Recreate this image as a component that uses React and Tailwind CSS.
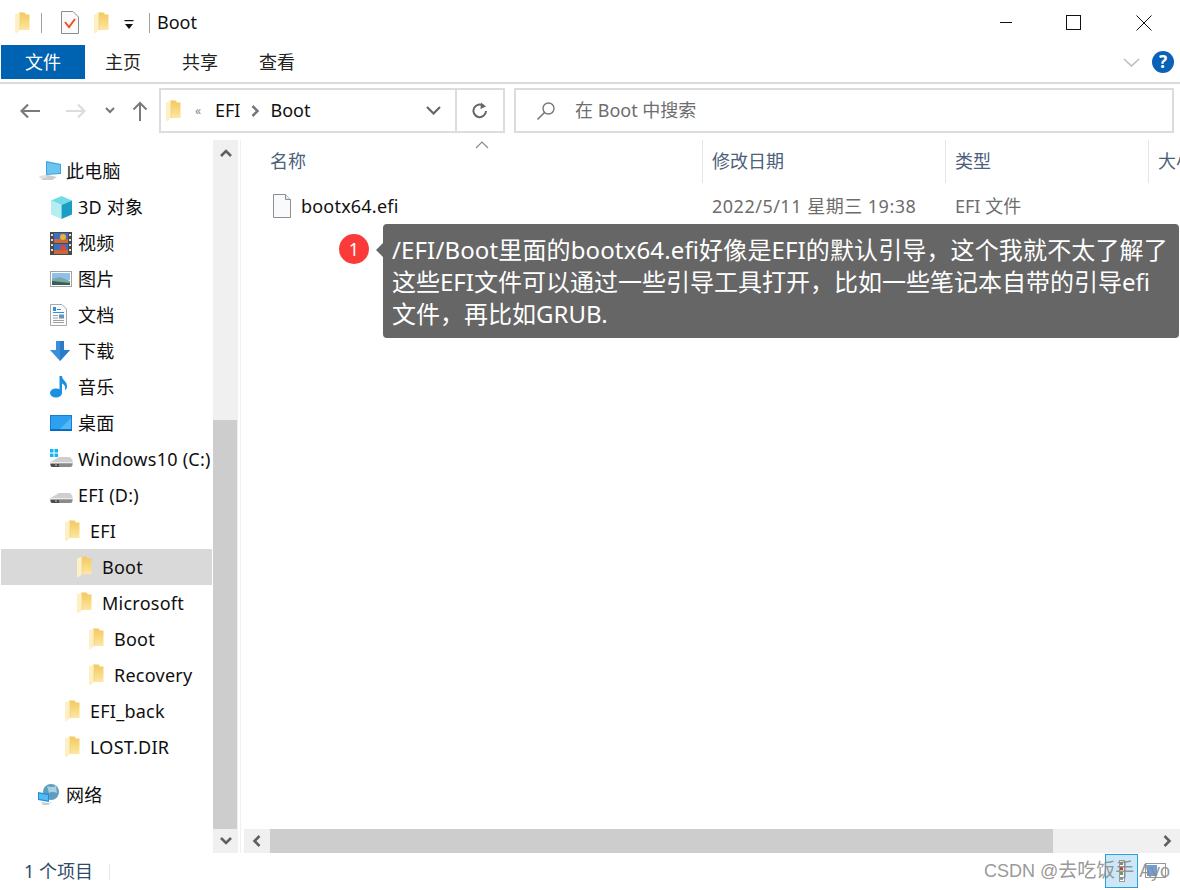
import React from 'react';

const FONT = '"Noto Sans", "Noto Sans CJK SC", sans-serif';

// small yellow explorer folder
const Folder = ({ className = '' }) => (
  <svg width="15" height="22" viewBox="0 0 15 22" className={className}>
    <defs>
      <linearGradient id="folderBody" x1="0" y1="0" x2="0" y2="1">
        <stop offset="0" stopColor="#f3c85f" />
        <stop offset="0.55" stopColor="#f9d981" />
        <stop offset="1" stopColor="#fde7a3" />
      </linearGradient>
    </defs>
    <path d="M4 0.5 H9.5 L11 2.5 H14.5 V18 H4 Z" fill="url(#folderBody)" />
    <path d="M0 2.5 L5 0.5 V18 L1.2 21.5 L0 20.5 Z" fill="#fdf0c4" />
    <path d="M5 0.5 V18" stroke="#f0cf7e" strokeWidth="0.6" />
  </svg>
);

const Drive = ({ win }) => (
  <svg width="23" height="20" viewBox="0 0 23 20">
    {win && (
      <g fill="#12b5f0">
        <rect x="0" y="0" width="3.5" height="3.5" />
        <rect x="4.5" y="0" width="3.5" height="3.5" />
        <rect x="0" y="4.5" width="3.5" height="3.5" />
        <rect x="4.5" y="4.5" width="3.5" height="3.5" />
      </g>
    )}
    <path d="M0.5 13 L9 8 H20 L22.5 11 V14 H0.5 Z" fill="#cfcfcf" />
    <path d="M0.5 13.5 H22.5 V15.5 Q22.5 18 20 18 H2.5 Q0.5 18 0.5 15.5 Z" fill="#8a8a8a" />
    <path d="M0.5 15 H9 V18 H2.5 Q0.5 18 0.5 15.5 Z" fill="#4c4c4c" />
    <rect x="5" y="15.5" width="2" height="1.2" fill="#7fd47f" />
    <rect x="0.5" y="13" width="22" height="1.3" fill="#ececec" />
  </svg>
);

const PcIcon = () => (
  <svg width="24" height="22" viewBox="0 0 24 22">
    <path d="M8 1 L23 4 V14 L8 15 Z" fill="#3ba5df" />
    <path d="M9 2.5 L22 5 V13 L9 14 Z" fill="#6cc4ef" />
    <path d="M2 16 L10 15 L19 17 L14 20 H4 Z" fill="#c9cdd1" />
    <path d="M0 17 L7 15.5 L10 17 L4 19 Z" fill="#dfe2e4" />
  </svg>
);

const CubeIcon = () => (
  <svg width="23" height="23" viewBox="0 0 23 23">
    <path d="M11.5 0 L22 4.5 L11.5 9 L1 4.5 Z" fill="#71dbe8" />
    <path d="M1 4.5 L11.5 9 V23 L1 18.5 Z" fill="#b5eef2" />
    <path d="M22 4.5 L11.5 9 V23 L22 18.5 Z" fill="#1a9fc4" />
  </svg>
);

const FilmIcon = () => (
  <svg width="22" height="23" viewBox="0 0 22 23">
    <rect width="22" height="23" fill="#4a4a4a" />
    <rect x="4" y="1" width="14" height="10" fill="#3c6fc4" />
    <rect x="4" y="12" width="14" height="10" fill="#3c6fc4" />
    <rect x="4" y="7" width="14" height="4" fill="#c96a3a" />
    <rect x="4" y="18" width="14" height="4" fill="#c96a3a" />
    <circle cx="13" cy="5" r="3" fill="#e8b53a" />
    <circle cx="13" cy="16" r="3" fill="#d84b3a" />
    <g fill="#ddd">
      <rect x="1" y="2" width="2" height="2" /><rect x="1" y="7" width="2" height="2" /><rect x="1" y="12" width="2" height="2" /><rect x="1" y="17" width="2" height="2" />
      <rect x="19" y="2" width="2" height="2" /><rect x="19" y="7" width="2" height="2" /><rect x="19" y="12" width="2" height="2" /><rect x="19" y="17" width="2" height="2" />
    </g>
  </svg>
);

const PictureIcon = () => (
  <svg width="22" height="16" viewBox="0 0 22 16">
    <rect x="0.5" y="0.5" width="21" height="15" fill="#fff" stroke="#a3a3a3" />
    <rect x="2" y="2" width="18" height="7" fill="#8fc0e8" />
    <path d="M2 8 L10 6 L20 10 V14 H2 Z" fill="#7fa8a0" />
    <path d="M2 10 L20 12 V14 H2 Z" fill="#35605a" />
  </svg>
);

const DocIcon = () => (
  <svg width="17" height="22" viewBox="0 0 17 22">
    <path d="M0.5 0.5 H12 L16.5 5 V21.5 H0.5 Z" fill="#fbfbfb" stroke="#a8a8a8" />
    <rect x="3" y="3" width="3" height="4" fill="#2f8fe0" />
    <rect x="7" y="5" width="4" height="1" fill="#2f8fe0" />
    <rect x="3" y="8" width="11" height="1" fill="#2f8fe0" />
    <rect x="9" y="10.5" width="5" height="4" fill="#6a93b5" />
    <g fill="#a0a0a0">
      <rect x="3" y="11" width="5" height="1" /><rect x="3" y="13.5" width="5" height="1" />
      <rect x="3" y="16" width="11" height="1" /><rect x="3" y="18" width="11" height="1" />
    </g>
  </svg>
);

const DownIcon = () => (
  <svg width="20" height="20" viewBox="0 0 20 20">
    <path d="M6 0 H14 V9 H20 L10 20 L0 9 H6 Z" fill="#3a8fdc" />
    <path d="M10 0 H14 V9 H20 L10 20 Z" fill="#2b7cc8" />
  </svg>
);

const MusicIcon = () => (
  <svg width="18" height="22" viewBox="0 0 18 22">
    <ellipse cx="6" cy="17" rx="6" ry="4.5" fill="#1b8fe0" />
    <path d="M9.5 0 H12 C12.5 5 17.5 5 17 11 C16.5 14 15 14 15 14 C16 10 13.5 8 12 7.5 V17 H9.5 Z" fill="#1b8fe0" />
  </svg>
);

const DesktopIcon = () => (
  <svg width="22" height="16" viewBox="0 0 22 16">
    <rect width="22" height="16" fill="#0f7fd9" />
    <path d="M1 1 H21 V14 H1 Z" fill="#2fa0f0" />
    <path d="M10 14 L21 3 V14 Z" fill="#54b8f5" />
    <rect y="14.5" width="22" height="1.5" fill="#0a66b8" />
  </svg>
);

const NetIcon = () => (
  <svg width="22" height="22" viewBox="0 0 22 22">
    <circle cx="13" cy="8" r="8" fill="#5d9dc0" />
    <path d="M9 2 Q14 4 18 2 L19 9 Q14 7 11 9 Z" fill="#a9cfe0" />
    <path d="M0 8 L11 10 V18 L0 16 Z" fill="#1f8fe0" />
    <path d="M1 9.5 L10 11 V16.5 L1 15 Z" fill="#56b9f2" />
    <path d="M3 18 L10 19 L14 18 L10 21 H5 Z" fill="#c8ccd0" />
  </svg>
);

const ScrollArrow = ({ d }) => (
  <svg width="14" height="14" viewBox="0 0 14 14">
    <path d={d} fill="none" stroke="#606060" strokeWidth="2.6" />
  </svg>
);

const navItems = [
  { label: '此电脑', pad: 'pl-[38px]', gap: 'gap-[4px]', icon: <PcIcon />, iconBox: 'w-[24px]' },
  { label: '3D 对象', pad: 'pl-[50px]', icon: <CubeIcon /> },
  { label: '视频', pad: 'pl-[50px]', icon: <FilmIcon /> },
  { label: '图片', pad: 'pl-[50px]', icon: <PictureIcon /> },
  { label: '文档', pad: 'pl-[50px]', icon: <DocIcon /> },
  { label: '下载', pad: 'pl-[50px]', icon: <DownIcon /> },
  { label: '音乐', pad: 'pl-[50px]', icon: <MusicIcon /> },
  { label: '桌面', pad: 'pl-[50px]', icon: <DesktopIcon /> },
  { label: 'Windows10 (C:)', pad: 'pl-[50px]', icon: <Drive win /> },
  { label: 'EFI (D:)', pad: 'pl-[50px]', icon: <Drive /> },
  { label: 'EFI', pad: 'pl-[65px]', icon: <Folder />, folder: true },
  { label: 'Boot', pad: 'pl-[76px]', icon: <Folder />, folder: true, selected: true },
  { label: 'Microsoft', pad: 'pl-[77px]', icon: <Folder />, folder: true },
  { label: 'Boot', pad: 'pl-[89px]', icon: <Folder />, folder: true },
  { label: 'Recovery', pad: 'pl-[89px]', icon: <Folder />, folder: true },
  { label: 'EFI_back', pad: 'pl-[65px]', icon: <Folder />, folder: true },
  { label: 'LOST.DIR', pad: 'pl-[65px]', icon: <Folder />, folder: true },
];

const NavRow = ({ item }) => (
  <div className={`flex items-center h-9 ${item.pad} ${item.gap || ''} ${item.selected ? 'bg-[#d9d9d9] mx-px' : ''} whitespace-nowrap overflow-hidden`}>
    <div className={`${item.iconBox || (item.folder ? 'w-[25px]' : 'w-[28px]')} shrink-0 flex items-center`}>{item.icon}</div>
    <span className="text-[18px] tracking-[0.25px] text-[#0f0f0f]">{item.label}</span>
  </div>
);

const TitleBar = () => (
  <div className="flex items-center h-[45px] pl-[15px]">
    <Folder />
    <div className="w-px h-[20px] bg-[#a0a0a0] ml-[11px]" />
    <svg width="18" height="23" viewBox="0 0 18 23" className="ml-[19px]">
      <path d="M0.5 0.5 H12 L17.5 6 V22.5 H0.5 Z" fill="#fafafa" stroke="#8c8c8c" />
      <path d="M4 11 L8 16 L14 8" fill="none" stroke="#e8562a" strokeWidth="2" />
    </svg>
    <Folder className="ml-[15px]" />
    <svg width="10" height="10" viewBox="0 0 10 10" className="ml-[15px] mt-[4px]">
      <rect x="0.5" y="0" width="9" height="1.2" fill="#111" />
      <path d="M1 4 H9 L5 9 Z" fill="#111" />
    </svg>
    <div className="w-px h-[20px] bg-[#a0a0a0] ml-[15px]" />
    <span className="ml-[7px] text-[18px] text-[#111]">Boot</span>
    <div className="ml-auto flex items-center">
      <div className="w-[12px] h-px bg-[#111]" />
      <div className="w-[15px] h-[15px] border border-[#111] ml-[54px]" />
      <svg width="16" height="16" viewBox="0 0 16 16" className="ml-[55px] mr-[28px]">
        <path d="M0.5 0.5 L15.5 15.5 M15.5 0.5 L0.5 15.5" stroke="#111" strokeWidth="1" />
      </svg>
    </div>
  </div>
);

const TabBar = () => (
  <div className="flex items-stretch h-[39px] border-b-2 border-[#dadada] pb-[1px] pl-px">
    <div className="w-[84px] h-[34px] bg-[#0063b1] text-white text-[18px] flex items-center justify-center">文件</div>
    <span className="ml-[20px] h-[34px] text-[18px] text-[#222] flex items-center">主页</span>
    <span className="ml-[41px] h-[34px] text-[18px] text-[#222] flex items-center">共享</span>
    <span className="ml-[41px] h-[34px] text-[18px] text-[#222] flex items-center">查看</span>
    <div className="ml-auto h-[34px] flex items-center mr-[6px]">
      <svg width="17" height="9" viewBox="0 0 17 9">
        <path d="M1 1 L8.5 8 L16 1" fill="none" stroke="#bdbdbd" strokeWidth="1.6" />
      </svg>
      <div className="ml-[12px] w-[22px] h-[22px] rounded-full bg-[#0a62b8] text-white text-[17px] font-bold flex items-center justify-center">?</div>
    </div>
  </div>
);

const AddressBar = () => (
  <div className="flex items-center h-[45px] mt-[4px] pl-[20px] pr-[6px]">
    <svg width="20" height="16" viewBox="0 0 20 16">
      <path d="M20 8 H2 M8 1.5 L1.5 8 L8 14.5" fill="none" stroke="#7a7a7a" strokeWidth="2.2" />
    </svg>
    <svg width="20" height="16" viewBox="0 0 20 16" className="ml-[26px]">
      <path d="M0 8 H18 M12 1.5 L18.5 8 L12 14.5" fill="none" stroke="#dcdcdc" strokeWidth="2.2" />
    </svg>
    <svg width="10" height="7" viewBox="0 0 10 7" className="ml-[19px]">
      <path d="M1 1 L5 5 L9 1" fill="none" stroke="#777" strokeWidth="2" />
    </svg>
    <svg width="16" height="20" viewBox="0 0 16 20" className="ml-[17px]">
      <path d="M8 20 V2 M1.5 8.5 L8 2 L14.5 8.5" fill="none" stroke="#7a7a7a" strokeWidth="2" />
    </svg>
    <div className="flex items-center h-[45px] w-[346px] ml-[11px] border-2 border-[#dcdcdc] pl-[5px]">
      <Folder />
      <span className="ml-[14px] text-[12px] text-[#888] w-[20px]">«</span>
      <span className="text-[18px] text-[#111]">EFI</span>
      <svg width="8" height="12" viewBox="0 0 8 12" className="ml-[11px]">
        <path d="M1.5 1 L6.5 6 L1.5 11" fill="none" stroke="#777" strokeWidth="2.6" />
      </svg>
      <span className="ml-[11px] text-[18px] text-[#111]">Boot</span>
      <svg width="15" height="9" viewBox="0 0 15 9" className="ml-auto">
        <path d="M1 1 L7.5 7.5 L14 1" fill="none" stroke="#666" strokeWidth="2.2" />
      </svg>
      <div className="w-[2px] h-full bg-[#dcdcdc] ml-[14px]" />
      <div className="w-[46px] flex items-center justify-center">
        <svg width="18" height="18" viewBox="0 0 18 18">
          <path d="M15 9 A6.3 6.3 0 1 1 12.5 3.8" fill="none" stroke="#666" strokeWidth="2" />
          <path d="M10 0.5 L15 4.5 L9.5 7 Z" fill="#666" />
        </svg>
      </div>
    </div>
    <div className="flex-1 flex items-center h-[45px] ml-[9px] border-2 border-[#dcdcdc] pl-[20px]">
      <svg width="20" height="20" viewBox="0 0 20 20">
        <circle cx="12.5" cy="7.5" r="5.5" fill="none" stroke="#777" strokeWidth="1.4" />
        <path d="M8.5 11.5 L1.5 18.5" stroke="#777" strokeWidth="1.6" />
      </svg>
      <span className="ml-[19px] text-[18px] text-[#6d6d6d]">在 Boot 中搜索</span>
    </div>
  </div>
);

const Sidebar = () => (
  <div className="w-[213px] shrink-0 pt-[13px]">
    {navItems.map((item, i) => (
      <NavRow key={i} item={item} />
    ))}
    <div className="mt-[12px]">
      <NavRow item={{ label: '网络', pad: 'pl-[38px]', gap: 'gap-[6px]', icon: <NetIcon />, iconBox: 'w-[22px]' }} />
    </div>
  </div>
);

const VScroll = () => (
  <div className="w-[25px] shrink-0 bg-[#f0f0f0] flex flex-col">
    <div className="h-[25px] flex items-center justify-center">
      <ScrollArrow d="M2 10 L7 5 L12 10" />
    </div>
    <div className="h-[255px]" />
    <div className="flex-1 bg-[#cdcdcd] mr-px" />
    <div className="h-[24px] flex items-center justify-center">
      <ScrollArrow d="M2 4 L7 9 L12 4" />
    </div>
  </div>
);

const ColHead = ({ w, label, last }) => (
  <div className={`${w} h-[43px] flex items-center shrink-0 ${last ? 'pl-[9px]' : 'pl-[9px] border-r border-[#e5e5e5]'}`}>
    <span className="text-[18px] text-[#4c607a] whitespace-nowrap">{label}</span>
  </div>
);

const FileList = () => (
  <div className="flex-1 flex flex-col min-w-0 ml-[3px]">
    <div className="flex-1 relative overflow-hidden">
      {/* sort caret */}
      <svg width="14" height="8" viewBox="0 0 14 8" className="absolute left-[231px] top-[1px]">
        <path d="M1 7 L7 1 L13 7" fill="none" stroke="#8a8a8a" strokeWidth="1.2" />
      </svg>
      <div className="flex pl-[17px]">
        <ColHead w="w-[442px]" label="名称" />
        <ColHead w="w-[243px]" label="修改日期" />
        <ColHead w="w-[203px]" label="类型" />
        <ColHead w="w-[40px]" label="大小" last />
      </div>
      <div className="flex items-center h-[46px] pl-[29px]">
        <svg width="18" height="24" viewBox="0 0 18 24" className="shrink-0">
          <path d="M0.5 0.5 H12.5 L17.5 5.5 V23.5 H0.5 Z" fill="#f9fafb" stroke="#8e8e8e" />
          <path d="M12.5 0.5 V5.5 H17.5" fill="#e8e8e8" stroke="#8e8e8e" />
        </svg>
        <span className="ml-[10px] w-[411px] text-[18px] tracking-[0.2px] text-[#111]">bootx64.efi</span>
        <span className="w-[243px] text-[18px] tracking-[0.5px] text-[#6d6d6d] whitespace-nowrap">2022/5/11 星期三 19:38</span>
        <span className="text-[18px] text-[#6d6d6d]">EFI 文件</span>
      </div>
    </div>
    <div className="h-[24px] shrink-0 bg-[#f0f0f0] flex items-center">
      <div className="w-[26px] flex items-center justify-center">
        <ScrollArrow d="M9.5 2 L4.5 7 L9.5 12" />
      </div>
      <div className="w-[783px] h-full bg-[#cdcdcd]" />
      <div className="ml-auto w-[26px] flex items-center justify-center">
        <ScrollArrow d="M4.5 2 L9.5 7 L4.5 12" />
      </div>
    </div>
  </div>
);

const StatusBar = () => (
  <div className="h-[37px] flex items-center pl-[24px]">
    <span className="text-[18px] text-[#2f4a68]">1 个项目</span>
    <div className="w-px h-[16px] bg-[#e8e8e8] ml-[16px]" />
  </div>
);

export default function App() {
  return (
    <div className="relative w-[1180px] h-[890px] bg-white overflow-hidden flex flex-col" style={{ fontFamily: FONT }}>
      <TitleBar />
      <TabBar />
      <AddressBar />
      <div className="flex flex-1 mt-[7px] min-h-0">
        <Sidebar />
        <VScroll />
        <div className="w-px shrink-0 ml-[2px] bg-[#f0f0f0]" />
        <FileList />
      </div>
      <StatusBar />

      {/* annotation bubble */}
      <div className="absolute left-[339px] top-[234px] w-[30px] h-[30px] rounded-full bg-[#fb3a3a] text-white text-[18px] flex items-center justify-center">1</div>
      <div className="absolute left-[376px] top-[243px] w-0 h-0 border-y-[7px] border-y-transparent border-r-[7px] border-r-[#666666]" />
      <div className="absolute left-[383px] top-[224px] w-[796px] h-[114px] bg-[#666666] rounded-[4px] pl-[9px] pt-[10px] text-white text-[24px] leading-[32px]">
        <div className="whitespace-nowrap tracking-[0.13px]">/EFI/Boot里面的bootx64.efi好像是EFI的默认引导，这个我就不太了解了</div>
        <div className="whitespace-nowrap">这些EFI文件可以通过一些引导工具打开，比如一些笔记本自带的引导efi</div>
        <div className="whitespace-nowrap">文件，再比如GRUB.</div>
      </div>

      {/* view toggle buttons + watermark */}
      <div className="absolute left-[1105px] top-[854px] w-[33px] h-[34px] bg-[#cce8f8] border border-[#26a0da] flex items-center justify-center">
        <div className="w-[6px] h-[22px] bg-white border border-[#999] flex flex-col items-center justify-around">
          <div className="w-[3px] h-[3px] bg-[#6a9a6a]" />
          <div className="w-[3px] h-[3px] bg-[#c04040]" />
          <div className="w-[3px] h-[3px] bg-[#6a9a6a]" />
          <div className="w-[3px] h-[3px] bg-[#999]" />
        </div>
      </div>
      <div className="absolute left-[1145px] top-[863px] w-[21px] h-[15px] bg-white border border-[#999] p-px">
        <div className="w-[10px] h-full bg-[#6f9fd8]" />
      </div>
      <div className="absolute left-[984px] top-[857px] text-[18px] text-[#8c8c8c]/90 whitespace-nowrap" style={{ fontFamily: '"Liberation Sans", "Noto Sans CJK SC", sans-serif' }}>CSDN @<span className="text-[19px]">去吃饭手</span> Ayo</div>
    </div>
  );
}
